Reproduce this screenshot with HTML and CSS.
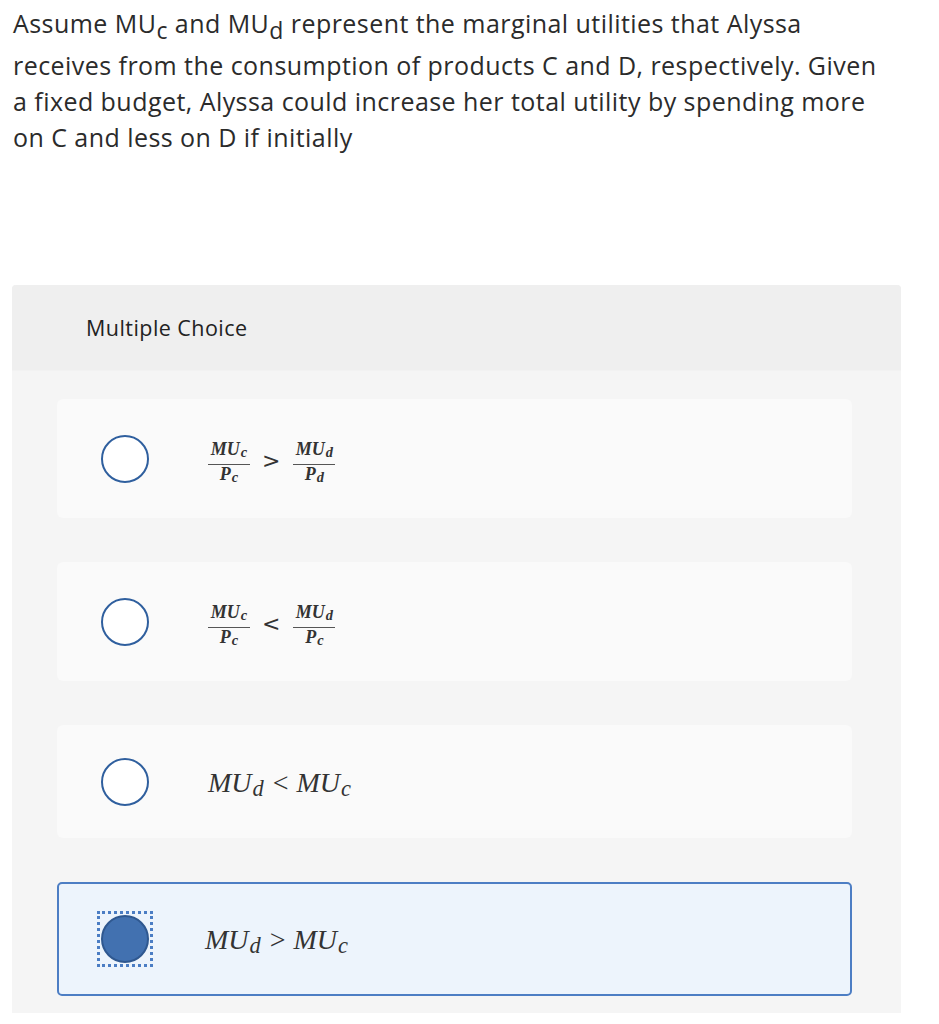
FILE: index.html
```html
<!DOCTYPE html>
<html lang="en">
<head>
<meta charset="utf-8">
<title>Multiple Choice</title>
<link rel="stylesheet" href="styles.css">
</head>
<body>
<div class="question">
  Assume MU<sub class="qsub">c</sub> and MU<sub class="qsub">d</sub> represent the marginal utilities that Alyssa receives from the consumption of products C and D, respectively. Given a fixed budget, Alyssa could increase her total utility by spending more on C and less on D if initially
</div>

<div class="panel">
  <div class="panel-head">Multiple Choice</div>
  <div class="panel-body">
    <div class="option option-frac">
      <span class="radio"></span>
      <span class="math">
        <span class="frac"><span class="num">MU<sub>c</sub></span><span class="den">P<sub>c</sub></span></span>
        <span class="op">&gt;</span>
        <span class="frac"><span class="num">MU<sub>d</sub></span><span class="den">P<sub>d</sub></span></span>
      </span>
    </div>
    <div class="option option-frac">
      <span class="radio"></span>
      <span class="math">
        <span class="frac"><span class="num">MU<sub>c</sub></span><span class="den">P<sub>c</sub></span></span>
        <span class="op">&lt;</span>
        <span class="frac"><span class="num">MU<sub>d</sub></span><span class="den">P<sub>c</sub></span></span>
      </span>
    </div>
    <div class="option">
      <span class="radio"></span>
      <span class="math big">MU<sub>d</sub><span class="bop">&lt;</span>MU<sub>c</sub></span>
    </div>
    <div class="option selected">
      <span class="focus-ring"><span class="radio checked"></span></span>
      <span class="math big">MU<sub>d</sub><span class="bop">&gt;</span>MU<sub>c</sub></span>
    </div>
  </div>
</div>
</body>
</html>
```

FILE: styles.css
```css
html, body {
  margin: 0;
  padding: 0;
  background: #ffffff;
}

body {
  font-family: "Open Sans", "Lato", sans-serif;
  color: #2b2b2b;
}

.question {
  width: 870px;
  padding: 5px 0 0 13px;
  font-size: 25px;
  letter-spacing: 0.45px;
  line-height: 36px;
  color: #2b2b2b;
}

.qsub {
  display: inline-block;
  font-size: 0.92em;
  line-height: 24px;
  vertical-align: -6px;
  margin-bottom: 5px;
}

.panel {
  margin: 130px 0 0 12px;
  width: 889px;
  background: #f5f5f5;
  border-radius: 4px 4px 0 0;
}

.panel-head {
  height: 85px;
  display: flex;
  align-items: center;
  padding-left: 74px;
  background: #efefef;
  border-radius: 4px 4px 0 0;
  font-size: 21.5px;
  letter-spacing: 0.45px;
  color: #222;
  border-bottom: 1px solid #f2f2f2;
}

.panel-body {
  display: flex;
  flex-direction: column;
  gap: 44px;
  padding: 28px 49px 17px 45px;
}

.option {
  display: flex;
  align-items: center;
  min-height: 113px;
  box-sizing: border-box;
  background: #fafafa;
  border-radius: 6px;
  padding-left: 44px;
}

.option-frac {
  min-height: 119px;
}

.option.selected {
  min-height: 114px;
  background: #edf4fc;
  border: 2px solid #4d7ec4;
  border-radius: 5px;
  padding-left: 38px;
}

.radio {
  display: block;
  width: 48px;
  height: 48px;
  box-sizing: border-box;
  border-radius: 50%;
  border: 2px solid #2f5f9e;
  background: #ffffff;
  flex: none;
}

.focus-ring {
  display: block;
  flex: none;
  padding: 1px;
  border: 3px dotted #4b7dc4;
}

.radio.checked {
  background: #4271b0;
  border-color: #2f5890;
}

.math {
  margin-left: 59px;
  font-family: "Liberation Serif", "Times New Roman", serif;
  font-style: italic;
  color: #333;
  display: flex;
  align-items: center;
}

.selected .math {
  margin-left: 52px;
}

.math sub {
  font-size: 0.8em;
  vertical-align: -0.2em;
  line-height: 0;
  margin-left: 1px;
}

.frac {
  display: inline-flex;
  flex-direction: column;
  align-items: center;
  font-size: 18px;
  line-height: 19px;
  font-weight: bold;
  margin-top: 6px;
}

.num {
  padding: 0 1px 5px;
  border-bottom: 1.5px solid #555;
  min-width: 42px;
  box-sizing: border-box;
  text-align: center;
}

.den {
  padding-top: 0;
}

.op {
  font-style: normal;
  font-family: "DejaVu Sans", sans-serif;
  font-size: 22px;
  margin: 4px 13px 0 12px;
  color: #333;
}

.math.big {
  display: block;
  font-size: 28px;
  font-weight: normal;
  margin-top: 2px;
}

.bop {
  font-style: normal;
  margin: 0 8px 0 9px;
}
```
